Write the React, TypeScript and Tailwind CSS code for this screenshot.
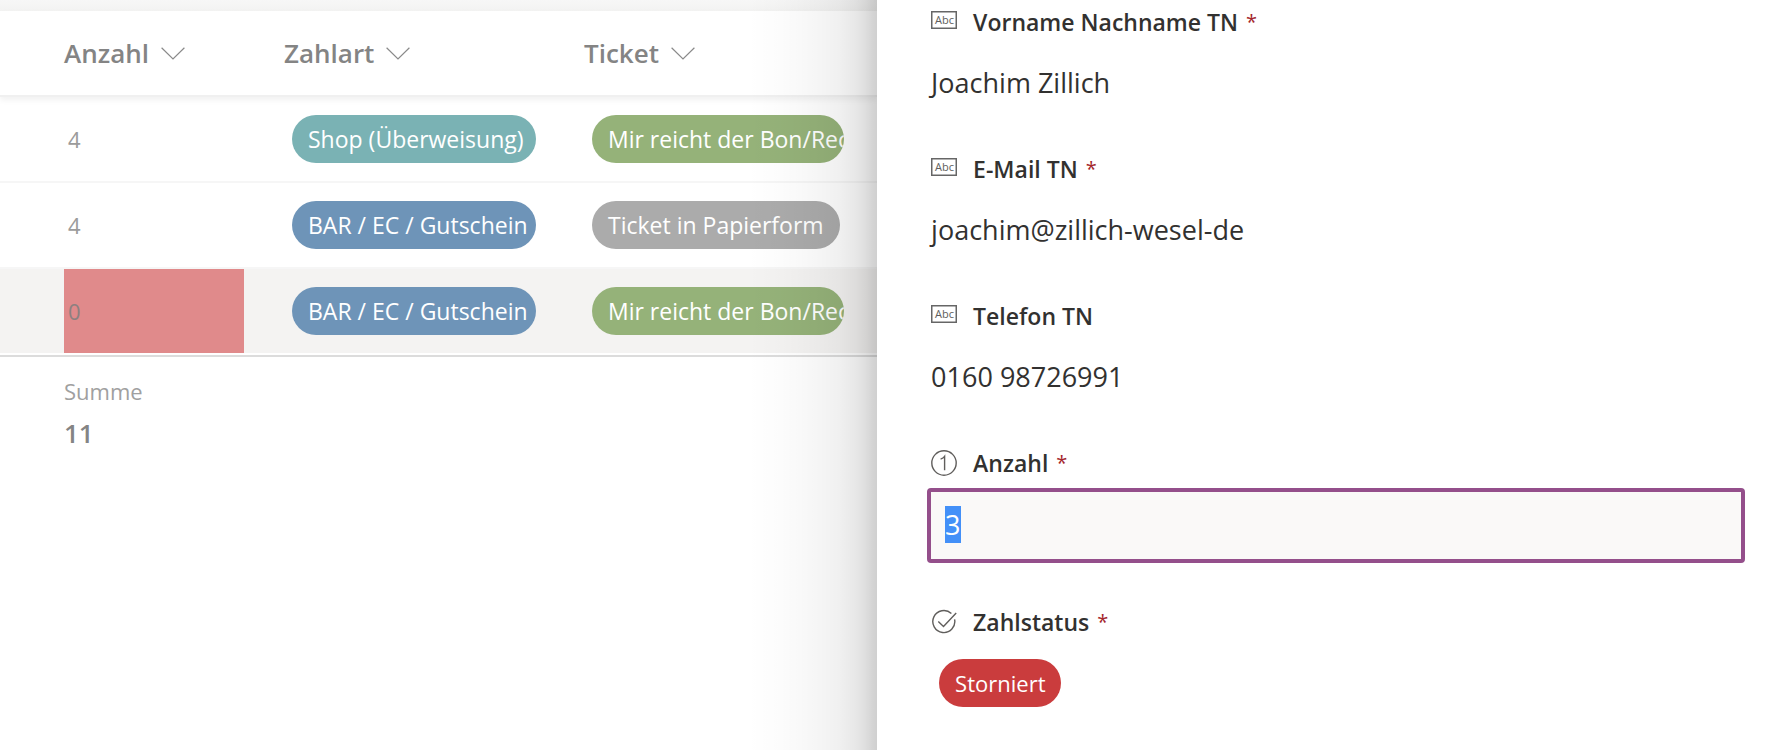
import React, { useEffect, useRef, useState } from 'react';
import clsx from 'clsx';

type PillColor = 'teal' | 'blue' | 'green' | 'gray';

interface Booking {
  id: number;
  count: number;
  payment: string;
  paymentColor: PillColor;
  ticket: string;
  ticketColor: PillColor;
  selected?: boolean;
}

const COLUMNS = ['Anzahl', 'Zahlart', 'Ticket'];

const BOOKINGS: Booking[] = [
  { id: 1, count: 4, payment: 'Shop (Überweisung)', paymentColor: 'teal', ticket: 'Mir reicht der Bon/Rechnung', ticketColor: 'green' },
  { id: 2, count: 4, payment: 'BAR / EC / Gutschein', paymentColor: 'blue', ticket: 'Ticket in Papierform', ticketColor: 'gray' },
  { id: 3, count: 0, payment: 'BAR / EC / Gutschein', paymentColor: 'blue', ticket: 'Mir reicht der Bon/Rechnung', ticketColor: 'green', selected: true },
];

const PILL_COLORS: Record<PillColor, string> = {
  teal: 'bg-[#7ab2b4]',
  blue: 'bg-[#6e94b8]',
  green: 'bg-[#95b279]',
  gray: 'bg-[#ababab]',
};

const ChevronIcon = () => (
  <svg width="24" height="13" viewBox="0 0 24 13" fill="none" stroke="#8a8a8a" strokeWidth="1.2">
    <path d="M0.6 0.8 12 12 23.4 0.8" />
  </svg>
);

const TextIcon = () => (
  <svg width="26" height="18" viewBox="0 0 26 18" className="mb-1">
    <rect x="0.75" y="0.75" width="24.5" height="16.5" fill="none" stroke="#666" strokeWidth="1.5" />
    <text x="13.5" y="13" textAnchor="middle" fontSize="11" fontWeight="500" fill="#605e5c">Abc</text>
  </svg>
);

const NumberIcon = () => (
  <svg width="26" height="26" viewBox="0 0 26 26" fill="none" stroke="#605e5c" strokeWidth="1.4">
    <circle cx="13" cy="13" r="12.2" />
    <path d="M9.6 9.1C11.4 8.6 12.7 7.7 13.6 6.4V20.3" />
  </svg>
);

const ChoiceIcon = () => (
  <svg width="26" height="26" viewBox="0 0 26 26" fill="none" stroke="#605e5c" strokeWidth="1.4">
    <path d="M20.4 4.6A11 11 0 1 0 23.6 10.4" />
    <path d="M7.3 12.6 12.5 17.5 25.2 4" />
  </svg>
);

const Pill: React.FC<{ color: PillColor; className?: string; children: React.ReactNode }> = ({ color, className, children }) => (
  <div className={clsx('h-12 overflow-hidden rounded-full px-4 text-[23px] leading-12 whitespace-nowrap text-white', PILL_COLORS[color], className)}>
    {children}
  </div>
);

const FieldLabel: React.FC<{ icon: React.ReactNode; required?: boolean; htmlFor?: string; children: React.ReactNode }> = ({
  icon,
  required,
  htmlFor,
  children,
}) => {
  const content = (
    <>
      <span className="flex w-[26px] shrink-0 justify-center">{icon}</span>
      <span className="font-semibold">{children}</span>
      {required && <span className="-ml-2 text-xl leading-8 text-[#a4262c]">*</span>}
    </>
  );
  const style = 'flex h-8 items-center gap-4 text-[23px] leading-8 text-[#323130]';

  return htmlFor ? <label htmlFor={htmlFor} className={style}>{content}</label> : <div className={style}>{content}</div>;
};

const TextField: React.FC<{ label: string; value: string; required?: boolean }> = ({ label, value, required }) => (
  <div className="mb-[50px]">
    <FieldLabel icon={<TextIcon />} required={required}>{label}</FieldLabel>
    <p className="mt-[25px] text-[27px] leading-10 text-[#323130]">{value}</p>
  </div>
);

const BookingTable = () => (
  <table className="w-full table-fixed border-separate border-spacing-0">
    <colgroup>
      <col className="w-16" />
      <col className="w-[220px]" />
      <col className="w-[300px]" />
      <col />
    </colgroup>
    <thead>
      <tr className="h-[86px] shadow-[0_3px_6px_rgba(0,0,0,0.06)]">
        <td className="border-b-2 border-[#f0f0f0] p-0" />
        {COLUMNS.map((name) => (
          <th key={name} className="border-b-2 border-[#f0f0f0] p-0 text-left">
            <button type="button" className="flex items-center gap-3 text-[26px] leading-9 font-semibold text-[#848484]">
              {name}
              <ChevronIcon />
            </button>
          </th>
        ))}
      </tr>
    </thead>
    <tbody>
      {BOOKINGS.map((b) => {
        const cell = clsx('border-b-2 p-0', b.selected ? 'border-white bg-[#f4f3f2]' : 'border-[#f6f6f6]');
        return (
          <tr key={b.id} className="h-[86px]">
            <td className={cell} />
            <td className={cell}>
              <div className={clsx('flex h-[84px] w-[180px] items-center px-1 text-[22px]', b.count === 0 ? 'bg-[#e08a8b] text-[#8d8080]' : 'text-[#9b9b9b]')}>
                {b.count}
              </div>
            </td>
            <td className={cell}>
              <Pill color={b.paymentColor} className="ml-2 w-[244px]">{b.payment}</Pill>
            </td>
            <td className={cell}>
              <Pill color={b.ticketColor} className="ml-2 w-fit max-w-[252px]">{b.ticket}</Pill>
            </td>
          </tr>
        );
      })}
    </tbody>
    <tfoot>
      <tr>
        <td className="border-t-2 border-[#dcdcdc] p-0" />
        <td colSpan={3} className="border-t-2 border-[#dcdcdc] p-0 pt-[18px]">
          <div className="text-[22px] leading-8 text-[#a0a0a0]">Summe</div>
          <div className="mt-1.5 text-[26px] leading-10 font-semibold text-[#848484]">11</div>
        </td>
      </tr>
    </tfoot>
  </table>
);

const DetailPanel = () => {
  const [count, setCount] = useState('3');
  const countRef = useRef<HTMLInputElement>(null);

  useEffect(() => {
    countRef.current?.focus();
    countRef.current?.select();
  }, []);

  return (
    <aside className="w-[51%] shrink-0 bg-white pt-1.5 pr-[45px] pl-[54px]">
      <TextField label="Vorname Nachname TN" value="Joachim Zillich" required />
      <TextField label="E-Mail TN" value="joachim@zillich-wesel-de" required />
      <TextField label="Telefon TN" value="0160 98726991" />

      <FieldLabel icon={<NumberIcon />} htmlFor="anzahl" required>Anzahl</FieldLabel>
      <div className="-ml-1 pt-[9px]">
        <input
          id="anzahl"
          ref={countRef}
          type="text"
          inputMode="numeric"
          value={count}
          onChange={(e) => setCount(e.target.value)}
          className="block h-[75px] w-full rounded-[4px] border-4 border-[#944f8b] bg-[#faf9f8] px-3.5 pb-0.5 text-[27px] text-[#323130] outline-none selection:bg-[#4390f8] selection:text-white"
        />
      </div>

      <div className="mt-[43px]">
        <FieldLabel icon={<ChoiceIcon />} required>Zahlstatus</FieldLabel>
        <div className="mt-[21px] ml-2 h-12 w-fit rounded-full bg-[#ca3c3d] px-4 text-[22px] leading-12 text-white">
          Storniert
        </div>
      </div>
    </aside>
  );
};

const App: React.FC = () => (
  <div className="flex min-h-screen bg-white font-['Open_Sans',sans-serif]">
    <main className="relative min-w-0 flex-1 overflow-hidden">
      <div className="h-[11px] bg-linear-to-b from-[#f7f7f7] to-[#f3f3f2]" />
      <BookingTable />
      {/* shade cast by the open panel */}
      <div className="pointer-events-none absolute inset-y-0 right-0 w-[130px] bg-[linear-gradient(to_left,rgba(0,0,0,0.19),rgba(0,0,0,0.165)_4%,rgba(0,0,0,0.13)_9%,rgba(0,0,0,0.09)_17%,rgba(0,0,0,0.058)_29%,rgba(0,0,0,0.038)_44%,rgba(0,0,0,0.022)_60%,rgba(0,0,0,0.01)_75%,transparent)]" />
    </main>
    <DetailPanel />
  </div>
);

export default App;
